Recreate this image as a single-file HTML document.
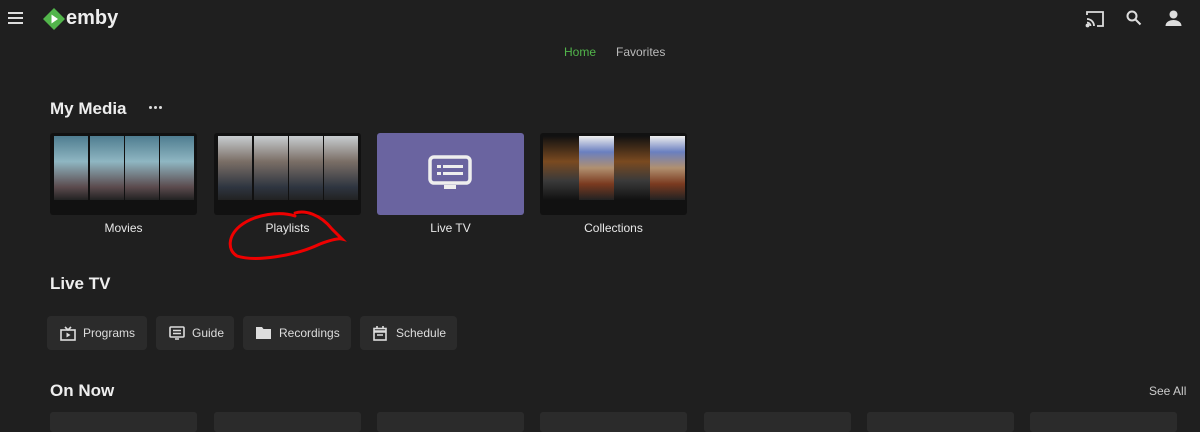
<!DOCTYPE html><html><head><style>
body{margin:0;width:1200px;height:421px;background:#1f1f1f;font-family:"Liberation Sans",sans-serif;color:#fff;overflow:hidden;position:relative}
.a{position:absolute}
.card{position:absolute;top:133px;width:147px;height:82px;border-radius:3px;background:#111;overflow:hidden}
.p{position:absolute;top:3px;width:34px;height:64px}
.lbl{position:absolute;top:221px;width:147px;text-align:center;font-size:12px;color:#e8e8e8}
h2{position:absolute;margin:0;font-size:17px;font-weight:bold;color:#eee}
.btn{position:absolute;top:316px;height:34px;background:#2b2b2b;border-radius:4px;font-size:12px;color:#ddd;line-height:34px}
.btn svg{position:absolute;left:13px;top:10px}
.btn span{position:absolute}
.on{position:absolute;top:412px;width:147px;height:20px;background:#2b2b2b;border-radius:3px}
</style></head><body>
<div class="a" style="left:8px;top:12px;width:15px;height:2px;background:#ddd;box-shadow:0 5px #ddd,0 10px #ddd"></div>
<svg class="a" style="left:42px;top:7px" width="24" height="24" viewBox="0 0 24 24"><polygon points="12,1 23,12 12,23 1,12" fill="#52b54b"/><polygon points="9.5,7.5 16,12 9.5,16.5" fill="#fff"/></svg>
<div class="a" style="left:66px;top:7px;font-size:20px;font-weight:bold;color:#eee">emby</div>
<svg class="a" style="left:1085px;top:10px" width="20" height="18" viewBox="0 0 20 18" fill="none" stroke="#ddd" stroke-width="1.8"><path d="M2 5V2h16v14h-6"/><path d="M2 9a7 7 0 0 1 7 7M2 12.5a3.5 3.5 0 0 1 3.5 3.5"/><circle cx="2.5" cy="15.5" r="1" fill="#ddd"/></svg>
<svg class="a" style="left:1126px;top:10px" width="16" height="16" viewBox="0 0 16 16" fill="none" stroke="#ddd" stroke-width="2"><circle cx="6" cy="6" r="4.5"/><path d="M9.5 9.5L14.5 14.5"/></svg>
<svg class="a" style="left:1165px;top:10px" width="17" height="16" viewBox="0 0 17 16" fill="#ddd"><circle cx="8.5" cy="4.5" r="4"/><path d="M0.5 16c0-4 4-6 8-6s8 2 8 6z"/></svg>
<div class="a" style="left:564px;top:45px;font-size:12px;color:#52b54b">Home</div>
<div class="a" style="left:616px;top:45px;font-size:12px;color:#bbb">Favorites</div>
<h2 style="left:50px;top:99px">My Media</h2>
<div class="a" style="left:149px;top:106px;width:3px;height:3px;border-radius:50%;background:#ddd;box-shadow:5px 0 #ddd,10px 0 #ddd"></div>

<div class="card" style="left:50px">
<div class="p" style="left:4px;background:linear-gradient(#4f7d90,#8fb6c2 40%,#5b4a4d 80%,#222)"></div>
<div class="p" style="left:40px;background:linear-gradient(#4f7d90,#8fb6c2 40%,#5b4a4d 80%,#222)"></div>
<div class="p" style="left:75px;background:linear-gradient(#4f7d90,#8fb6c2 40%,#5b4a4d 80%,#222)"></div>
<div class="p" style="left:110px;background:linear-gradient(#4f7d90,#8fb6c2 40%,#5b4a4d 80%,#222)"></div></div>
<div class="card" style="left:214px">
<div class="p" style="left:4px;background:linear-gradient(#c8cdd0,#7a6e66 40%,#2e3540 80%,#222)"></div>
<div class="p" style="left:40px;background:linear-gradient(#c8cdd0,#7a6e66 40%,#2e3540 80%,#222)"></div>
<div class="p" style="left:75px;background:linear-gradient(#c8cdd0,#7a6e66 40%,#2e3540 80%,#222)"></div>
<div class="p" style="left:110px;background:linear-gradient(#c8cdd0,#7a6e66 40%,#2e3540 80%,#222)"></div></div>
<div class="card" style="left:377px;background:#6a64a0">
<svg class="a" style="left:51px;top:22px" width="44" height="36" viewBox="0 0 44 36" fill="none"><rect x="2" y="2" width="40" height="26" rx="4" stroke="#eee" stroke-width="3.5"/><rect x="16" y="30" width="12" height="4" fill="#eee"/><rect x="9" y="10" width="4" height="3" fill="#eee"/><rect x="15" y="10" width="20" height="3" fill="#eee"/><rect x="9" y="17" width="4" height="3" fill="#eee"/><rect x="15" y="17" width="20" height="3" fill="#eee"/></svg></div>
<div class="card" style="left:540px">
<div class="p" style="left:3px;width:36px;background:linear-gradient(#111,#7a4a20 40%,#3a3a3a 70%,#111)"></div>
<div class="p" style="left:39px;width:35px;background:linear-gradient(#eee,#6a7fc0 25%,#b09070 50%,#7a3a20 75%,#222)"></div>
<div class="p" style="left:74px;width:36px;background:linear-gradient(#111,#7a4a20 40%,#3a3a3a 70%,#111)"></div>
<div class="p" style="left:110px;width:35px;background:linear-gradient(#eee,#6a7fc0 25%,#b09070 50%,#7a3a20 75%,#222)"></div></div>
<div class="lbl" style="left:50px">Movies</div>
<div class="lbl" style="left:214px">Playlists</div>
<div class="lbl" style="left:377px">Live TV</div>
<div class="lbl" style="left:540px">Collections</div>
<svg class="a" style="left:225px;top:208px" width="125" height="55" viewBox="0 0 125 55" fill="none" stroke="#e00" stroke-width="3" stroke-linecap="round"><path d="M70 8C55 3 30 6 15 18 3 28 2 42 12 48 30 54 70 48 95 36c8-3 18-6 22-5l-10-10C95 6 80 2 70 5"/></svg>

<h2 style="left:50px;top:274px">Live TV</h2>
<div class="btn" style="left:47px;width:100px"><svg width="16" height="15" viewBox="0 0 16 15" fill="none" stroke="#ddd" stroke-width="1.6"><rect x="1" y="4" width="14" height="10"/><path d="M5 1l3 3 3-3"/><path d="M6.5 6.5v5l4-2.5z" fill="#ddd" stroke="none"/></svg><span style="left:36px">Programs</span></div>
<div class="btn" style="left:156px;width:78px"><svg width="16" height="14" viewBox="0 0 16 14" fill="none" stroke="#ddd" stroke-width="1.6"><rect x="1" y="1" width="14" height="10" rx="1"/><path d="M4 4.5h8M4 7.5h8M6 13h4"/></svg><span style="left:36px">Guide</span></div>
<div class="btn" style="left:243px;width:108px"><svg width="15" height="13" viewBox="0 0 15 13" fill="#ddd"><path d="M0 1h6l1.5 2H15v10H0z"/></svg><span style="left:36px">Recordings</span></div>
<div class="btn" style="left:360px;width:97px"><svg width="14" height="15" viewBox="0 0 14 15" fill="none" stroke="#ddd" stroke-width="1.6"><rect x="1" y="2.5" width="12" height="11.5"/><path d="M1 5.5h12" stroke-width="2.5"/><path d="M4 0v3M10 0v3M4 9h6"/></svg><span style="left:36px">Schedule</span></div>

<h2 style="left:50px;top:381px">On Now</h2>
<div class="a" style="left:1149px;top:384px;font-size:12px;color:#ccc">See All</div>
<div class="on" style="left:50px"></div><div class="on" style="left:214px"></div><div class="on" style="left:377px"></div><div class="on" style="left:540px"></div><div class="on" style="left:704px"></div><div class="on" style="left:867px"></div><div class="on" style="left:1030px"></div>
</body></html>
